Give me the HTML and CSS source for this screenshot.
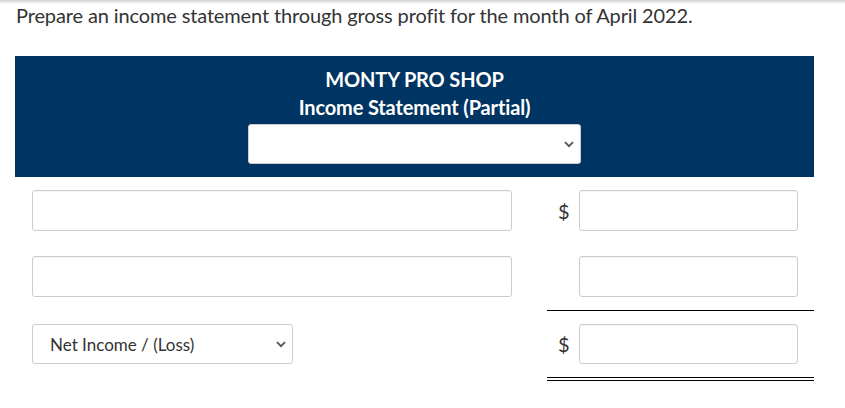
FILE: index.html
```html
<!DOCTYPE html>
<html>
<head>
<meta charset="utf-8">
<link rel="stylesheet" href="styles.css">
</head>
<body>
<div class="shade"></div>
<p class="question">Prepare an income statement through gross profit for the month of April 2022.</p>
<div class="panel">
  <div class="title">MONTY PRO SHOP</div>
  <div class="title">Income Statement (Partial)</div>
  <div class="select-wrap head-select">
    <select class="select"><option></option></select>
    <svg class="chev" width="10" height="7" viewBox="0 0 10 7"><path d="M1 1.2 L5 5.2 L9 1.2" fill="none" stroke="#555" stroke-width="1.8"/></svg>
  </div>
</div>
<div class="sheet">
  <div class="row r1">
    <div class="label-cell"><input class="field wide" type="text"></div>
    <div class="amount-cell"><span class="dollar">$</span><input class="field amount" type="text"></div>
  </div>
  <div class="row r2">
    <div class="label-cell"><input class="field wide" type="text"></div>
    <div class="amount-cell single"><span class="dollar"></span><input class="field amount" type="text"></div>
  </div>
  <div class="row r3">
    <div class="label-cell">
      <div class="select-wrap ni-select">
        <select class="select"><option>Net Income / (Loss)</option></select>
        <svg class="chev" width="10" height="7" viewBox="0 0 10 7"><path d="M1 1.2 L5 5.2 L9 1.2" fill="none" stroke="#555" stroke-width="1.8"/></svg>
      </div>
    </div>
    <div class="amount-cell double"><span class="dollar">$</span><input class="field amount tall40" type="text"></div>
  </div>
</div>
</body>
</html>
```
FILE: styles.css
```css
html, body {
  margin: 0;
  padding: 0;
  background: #fff;
  font-family: Lato, "Open Sans", sans-serif;
  color: #333;
}
.shade {
  height: 4px;
  background: linear-gradient(#cfcfcf, #ffffff);
}
.question {
  margin: 0;
  padding-left: 16px;
  font-size: 20px;
  line-height: 22px;
  letter-spacing: -0.13px;
  color: #333;
}
.panel {
  margin: 30px 0 0 15px;
  width: 799px;
  background: #003462;
  padding: 9px 0 13px;
  display: flex;
  flex-direction: column;
  align-items: center;
}
.title {
  color: #fff;
  font-weight: 700;
  font-size: 20px;
  line-height: 28px;
  letter-spacing: -0.15px;
}
.select-wrap {
  position: relative;
}
.head-select {
  margin-top: 3px;
  width: 333px;
  height: 40px;
}
.select {
  appearance: none;
  -webkit-appearance: none;
  width: 100%;
  height: 100%;
  margin: 0;
  border: 1px solid #ccc;
  border-radius: 3px;
  background: #fff;
  font-family: Lato, sans-serif;
  font-size: 17px;
  color: #333;
  padding: 0 0 0 17px;
  box-sizing: border-box;
}
.chev {
  position: absolute;
  right: 7px;
  top: 17px;
}
.sheet {
  margin-left: 15px;
  width: 799px;
}
.row {
  display: grid;
  grid-template-columns: 480px 35px 267px;
  padding-left: 17px;
  align-items: start;
}
.label-cell {
  padding-top: 13px;
}
.amount-cell {
  grid-column: 3;
  display: flex;
  align-items: center;
  padding-top: 13px;
  padding-bottom: 12px;
}
.amount-cell.single {
  padding-bottom: 13px;
  border-bottom: 1px solid #000;
}
.amount-cell.double {
  padding-bottom: 13px;
  border-bottom: 4px double #000;
}
.dollar {
  width: 32px;
  box-sizing: border-box;
  padding-left: 11px;
  font-size: 20px;
  color: #333;
}
.field {
  display: block;
  margin: 0;
  height: 41px;
  box-sizing: border-box;
  border: 1px solid #ccc;
  border-radius: 3px;
  background: #fff;
  box-shadow: inset 0 1px 1px rgba(0,0,0,0.04);
  font-family: Lato, sans-serif;
  font-size: 16px;
}
.field.wide {
  width: 480px;
}
.field.amount {
  width: 219px;
}
.field.tall40 {
  height: 40px;
}
.ni-select {
  width: 261px;
  height: 40px;
}
```
